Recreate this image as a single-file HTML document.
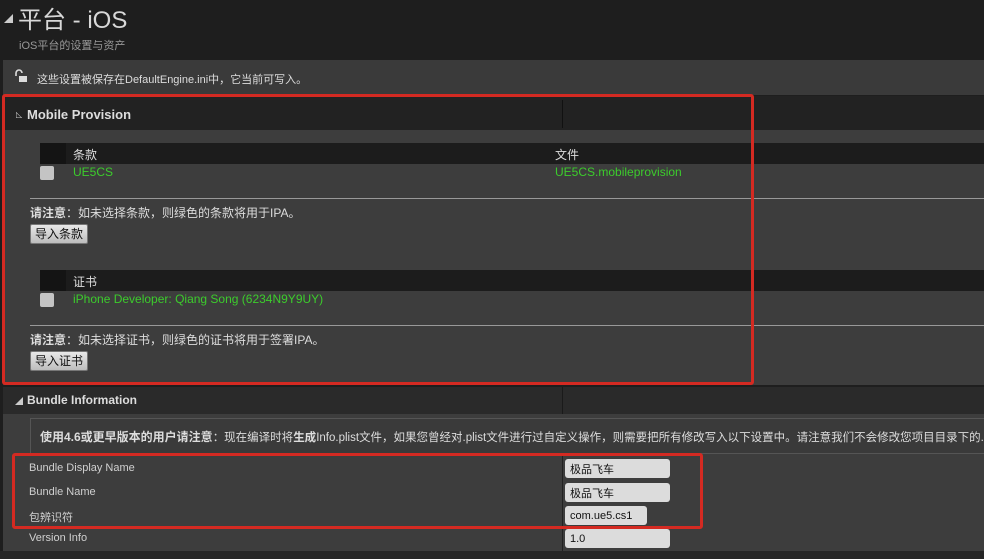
<!DOCTYPE html>
<html><head><meta charset="utf-8"><style>
*{margin:0;padding:0;box-sizing:border-box}
body{width:984px;height:559px;overflow:hidden;background:#1e1e1e;font-family:"Liberation Sans","Noto Sans CJK SC",sans-serif;color:#d0d0d0;position:relative}
.a{position:absolute;white-space:nowrap}
.g{color:#3ccc2c;font-size:12px}
.t12{font-size:11px}
.t13{font-size:12px}
.btn{position:absolute;background:linear-gradient(#e8e8e8,#bdbdbd);border:1px solid #777;color:#111;font-size:12px;text-align:center;line-height:18px;border-radius:2px}
.chk{position:absolute;width:14px;height:14px;background:#c4c4c4;border-radius:2px}
.inp{position:absolute;background:#dcdcdc;color:#111;font-size:11px;display:flex;align-items:center;padding-left:5px;border-radius:3px;height:19px}
.red{position:absolute;border:3px solid #d42a22;border-radius:3px}
</style></head><body>
<div class="a" style="left:4px;top:12px;font-size:9px;color:#ccc">◢</div>
<div class="a" style="left:18px;top:0px;font-size:24px;color:#d8d8d8">平台 - iOS</div>
<div class="a" style="left:19px;top:37px;font-size:11px;color:#999">iOS平台的设置与资产</div>
<div class="a" style="left:3px;top:60px;width:981px;height:35px;background:#3a3a3a"></div>
<svg class="a" style="left:14px;top:69px" width="14" height="14" viewBox="0 0 14 14"><path d="M2 7V4a3 3 0 0 1 6 0" stroke="#ddd" stroke-width="1.6" fill="none"/><rect x="5" y="7" width="8" height="6" fill="#ddd"/></svg>
<div class="a" style="left:37px;top:71px;font-size:11px;color:#ddd">这些设置被保存在DefaultEngine.ini中，它当前可写入。</div>
<div class="a" style="left:3px;top:96px;width:981px;height:34px;background:#222"></div>
<div class="a" style="left:562px;top:100px;width:1px;height:28px;background:#111"></div>
<div class="a" style="left:16px;top:110px;font-size:8px;color:#ccc">◺</div>
<div class="a" style="left:27px;top:107px;font-size:13px;font-weight:bold;color:#ddd">Mobile Provision</div>
<div class="a" style="left:3px;top:130px;width:981px;height:255px;background:#3d3d3d"></div>
<div class="a" style="left:40px;top:143px;width:944px;height:21px;background:#1c1c1c"></div>
<div class="a" style="left:40px;top:143px;width:26px;height:21px;background:#141414"></div>
<div class="a t13" style="left:73px;top:146px;color:#ddd">条款</div>
<div class="a t13" style="left:555px;top:146px;color:#ddd">文件</div>
<div class="chk" style="left:40px;top:166px"></div>
<div class="a g" style="left:73px;top:165px">UE5CS</div>
<div class="a g" style="left:555px;top:165px">UE5CS.mobileprovision</div>
<div class="a" style="left:30px;top:198px;width:954px;height:1px;background:#999"></div>
<div class="a t13" style="left:30px;top:204px;color:#ddd"><b>请注意</b>：如未选择条款，则绿色的条款将用于IPA。</div>
<div class="btn" style="left:30px;top:224px;width:58px;height:20px">导入条款</div>
<div class="a" style="left:40px;top:270px;width:944px;height:21px;background:#1c1c1c"></div>
<div class="a" style="left:40px;top:270px;width:26px;height:21px;background:#141414"></div>
<div class="a t13" style="left:73px;top:273px;color:#ddd">证书</div>
<div class="chk" style="left:40px;top:293px"></div>
<div class="a g" style="left:73px;top:292px">iPhone Developer: Qiang Song (6234N9Y9UY)</div>
<div class="a" style="left:30px;top:325px;width:954px;height:1px;background:#999"></div>
<div class="a t13" style="left:30px;top:331px;color:#ddd"><b>请注意</b>：如未选择证书，则绿色的证书将用于签署IPA。</div>
<div class="btn" style="left:30px;top:351px;width:58px;height:20px">导入证书</div>
<div class="red" style="left:2px;top:94px;width:752px;height:291px"></div>
<div class="a" style="left:3px;top:387px;width:981px;height:27px;background:#2a2a2a"></div>
<div class="a" style="left:562px;top:387px;width:1px;height:165px;background:#1a1a1a"></div>
<div class="a" style="left:15px;top:396px;font-size:8px;color:#ccc">◢</div>
<div class="a" style="left:27px;top:393px;font-size:12px;font-weight:bold;color:#ddd">Bundle Information</div>
<div class="a" style="left:3px;top:414px;width:981px;height:137px;background:#3d3d3d"></div>
<div class="a" style="left:562px;top:455px;width:1px;height:96px;background:#222"></div>
<div class="a" style="left:30px;top:418px;width:954px;height:36px;background:#3a3a3a;border:1px solid #555;border-right:none"></div>
<div class="a" style="left:40px;top:428px;color:#ddd;font-size:11.5px"><b style="font-size:12px">使用4.6或更早版本的用户请注意</b>：现在编译时将<b>生成</b>Info.plist文件，如果您曾经对.plist文件进行过自定义操作，则需要把所有修改写入以下设置中。请注意我们不会修改您项目目录下的.plist文件</div>
<div class="a t12" style="left:29px;top:462px">Bundle Display Name</div>
<div class="a t12" style="left:29px;top:486px">Bundle Name</div>
<div class="a t12" style="left:29px;top:509px">包辨识符</div>
<div class="a t12" style="left:29px;top:532px">Version Info</div>
<div class="inp" style="left:565px;top:459px;width:105px">极品飞车</div>
<div class="inp" style="left:565px;top:483px;width:105px">极品飞车</div>
<div class="inp" style="left:565px;top:506px;width:82px">com.ue5.cs1</div>
<div class="inp" style="left:565px;top:529px;width:105px">1.0</div>
<div class="red" style="left:12px;top:453px;width:691px;height:76px"></div>
<div class="a" style="left:0;top:551px;width:984px;height:8px;background:#262626"></div>
</body></html>
